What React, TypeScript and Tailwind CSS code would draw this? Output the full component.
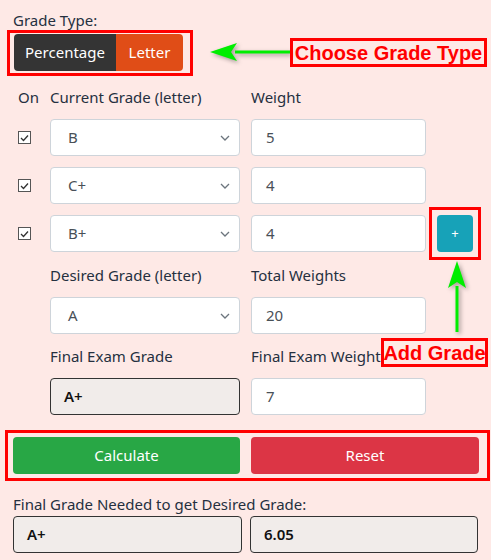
import React from "react";

const font = { fontFamily: '"Noto Sans", "Open Sans", sans-serif' };
const annot = { fontFamily: '"Liberation Sans", Arial, sans-serif' };

function Chevron() {
  return (
    <svg width="10" height="6" viewBox="0 0 10 6" className="text-[#6c757d]">
      <path d="M1 1l4 4 4-4" fill="none" stroke="currentColor" strokeWidth="1.3" />
    </svg>
  );
}

function Check() {
  return (
    <span className="flex h-[13px] w-[13px] items-center justify-center border border-[#555] bg-white">
      <svg width="9" height="8" viewBox="0 0 9 8">
        <path d="M1 4l2.5 2.5L8 1.5" fill="none" stroke="#333" strokeWidth="1.3" />
      </svg>
    </span>
  );
}

function Select({ value }: { value: string }) {
  return (
    <div className="flex h-[37px] w-[190px] items-center justify-between rounded-[4px] border border-[#ced4da] bg-white pl-[17px] pr-[9px] text-[15px] text-[#495057]">
      <span>{value}</span>
      <Chevron />
    </div>
  );
}

function Field({ value }: { value: string }) {
  return (
    <div className="flex h-[37px] w-[175px] items-center rounded-[4px] border border-[#ced4da] bg-white pl-[14px] text-[15px] text-[#495057]">
      {value}
    </div>
  );
}

function Readout({ value, w }: { value: string; w: string }) {
  return (
    <div className={`flex h-[37px] ${w} items-center rounded-[4px] border border-[#333] bg-[#f1ecea] pl-[13px] text-[15px] font-semibold text-[#111]`}>
      {value}
    </div>
  );
}

const rows = ["B", "C+", "B+"];
const weights = ["5", "4", "4"];

export default function App() {
  return (
    <div className="relative h-[560px] w-[491px] overflow-hidden bg-[#fee9e6] text-[15px] text-[#25303f]" style={font}>
      <div className="pl-[13px] pt-[10px]">
        <p className="leading-[20px]">Grade Type:</p>
        <div className="ml-[-6px] inline-block border-[3px] border-[#ff0000] pb-[2px] pl-[4px] pr-[7px] pt-[1px]">
          <div className="flex h-[37px] overflow-hidden rounded-[4px] text-white">
            <span className="flex w-[102px] items-center justify-center bg-[#343434]">Percentage</span>
            <span className="flex w-[67px] items-center justify-center bg-[#e04d17]">Letter</span>
          </div>
        </div>

        <div className="mt-[9px] flex leading-[24px]">
          <span className="w-[37px] pl-[5px]">On</span>
          <span className="w-[201px]">Current Grade (letter)</span>
          <span>Weight</span>
        </div>

        <div className="mt-[10px] flex flex-col gap-[11px]">
          {rows.map((r, i) => (
            <div key={r} className="flex items-center">
              <span className="w-[37px] pl-[5px]">
                <Check />
              </span>
              <Select value={r} />
              <span className="w-[11px]" />
              <Field value={weights[i]} />
              {i === 2 && (
                <div className="my-[-8px] ml-[3px] border-[3px] border-[#ff0000] p-[5px]">
                  <button className="flex h-[37px] w-[36px] items-center justify-center rounded-[4px] bg-[#17a2b8] text-[13px] text-white">+</button>
                </div>
              )}
            </div>
          ))}
        </div>

        <div className="mt-[11px] flex pl-[37px] leading-[24px]">
          <span className="w-[201px]">Desired Grade (letter)</span>
          <span>Total Weights</span>
        </div>
        <div className="mt-[10px] flex pl-[37px]">
          <Select value="A" />
          <span className="w-[11px]" />
          <Field value="20" />
        </div>

        <div className="mt-[10px] flex pl-[37px] leading-[24px]">
          <span className="w-[201px]">Final Exam Grade</span>
          <span>Final Exam Weight</span>
        </div>
        <div className="mt-[10px] flex pl-[37px]">
          <Readout value="A+" w="w-[190px]" />
          <span className="w-[11px]" />
          <Field value="7" />
        </div>

        <div className="ml-[-8px] mt-[15px] flex w-[485px] gap-[11px] border-[3px] border-[#ff0000] px-[5px] py-[4px]">
          <button className="flex h-[37px] w-[227px] items-center justify-center rounded-[4px] bg-[#28a745] text-white">Calculate</button>
          <button className="flex h-[37px] w-[228px] items-center justify-center rounded-[4px] bg-[#dc3545] text-white">Reset</button>
        </div>

        <p className="mt-[11px] leading-[24px]">Final Grade Needed to get Desired Grade:</p>
        <div className="flex gap-[8px]">
          <Readout value="A+" w="w-[229px]" />
          <Readout value="6.05" w="w-[228px]" />
        </div>
      </div>

      {/* annotations */}
      <svg className="absolute left-[205px] top-[40px]" width="90" height="26" viewBox="0 0 90 26" style={{ filter: "drop-shadow(2px 2px 2px rgba(0,0,0,0.35))" }}>
        <path d="M85 12H30" stroke="#00ee00" strokeWidth="3" />
        <path d="M5 12L32 3L26 12L32 21Z" fill="#00ee00" />
      </svg>
      <div className="absolute left-[290px] top-[38px] flex h-[29px] w-[197px] items-center justify-center whitespace-nowrap border-[3px] border-[#ff0000] text-[20px] font-bold text-[#ff0000]" style={annot}>
        Choose Grade Type
      </div>

      <svg className="absolute left-[444px] top-[258px]" width="26" height="78" viewBox="0 0 26 78" style={{ filter: "drop-shadow(2px 2px 2px rgba(0,0,0,0.35))" }}>
        <path d="M13 74V28" stroke="#00ee00" strokeWidth="3" />
        <path d="M13 3L22 30L13 24L4 30Z" fill="#00ee00" />
      </svg>
      <div className="absolute left-[381px] top-[338px] flex h-[29px] w-[107px] items-center justify-center whitespace-nowrap border-[3px] border-[#ff0000] bg-[#fee9e6] text-[20px] font-bold text-[#ff0000]" style={annot}>
        Add Grade
      </div>
    </div>
  );
}
